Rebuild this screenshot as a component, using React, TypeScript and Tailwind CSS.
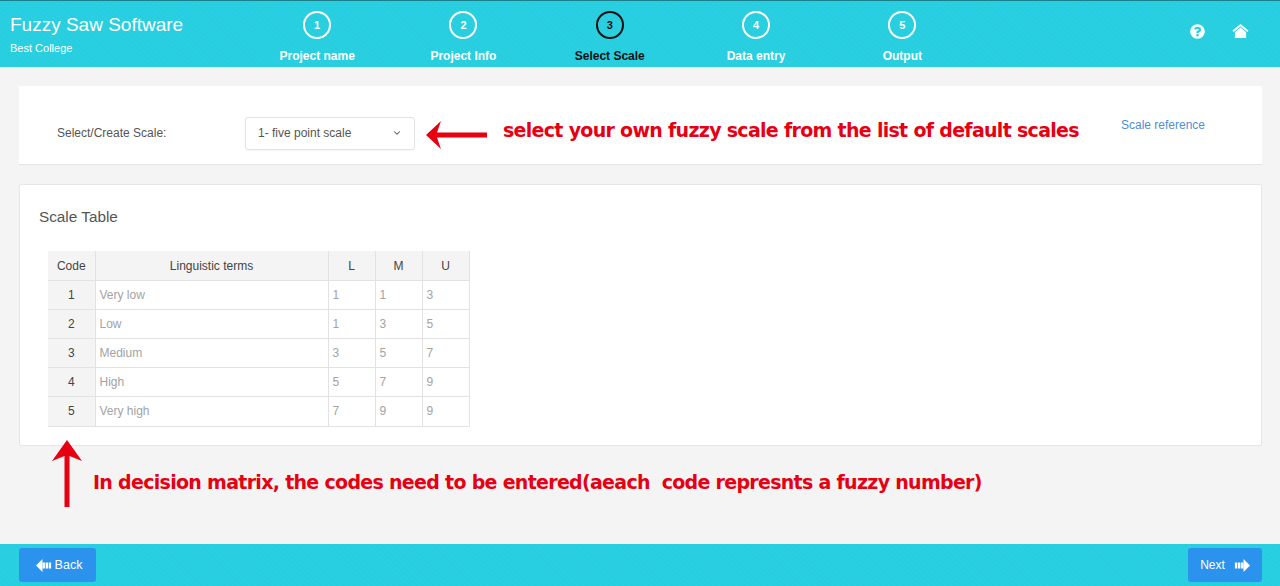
import React from "react";
import { ChevronDown } from "lucide-react";
import { FaQuestionCircle } from "react-icons/fa";

const steps = [
  { n: 1, label: "Project name" },
  { n: 2, label: "Project Info" },
  { n: 3, label: "Select Scale", active: true },
  { n: 4, label: "Data entry" },
  { n: 5, label: "Output" },
];

const rows = [
  { code: 1, term: "Very low", l: 1, m: 1, u: 3 },
  { code: 2, term: "Low", l: 1, m: 3, u: 5 },
  { code: 3, term: "Medium", l: 3, m: 5, u: 7 },
  { code: 4, term: "High", l: 5, m: 7, u: 9 },
  { code: 5, term: "Very high", l: 7, m: 9, u: 9 },
];

const HomeIcon = () => (
  <svg width="17" height="14" viewBox="0 0 16 14" fill="white">
    <path d="M8 0 L16 6.6 L14.8 7.9 L8 2.4 L1.2 7.9 L0 6.6 Z" />
    <path d="M8 3.6 L13.6 8.2 V14 H2.4 V8.2 Z" />
  </svg>
);

// striped arrow used on the footer buttons
const StripedArrow = ({ flip }: { flip?: boolean }) => (
  <svg width="16" height="13" viewBox="0 0 16 13" fill="white" className={flip ? "rotate-180" : ""}>
    <path d="M0 6.5 L6.5 0 V13 Z" />
    <rect x="6.5" y="3.5" width="2.4" height="6" />
    <rect x="9.6" y="3.5" width="2.4" height="6" />
    <rect x="12.7" y="3.5" width="2.4" height="6" />
  </svg>
);

const LeftRedArrow = () => (
  <svg width="61" height="28" viewBox="0 0 61 28" className="shrink-0">
    <path d="M0 14 L15 0 L11 11.5 H61 V16.5 H11 L15 28 Z" fill="#e60012" />
  </svg>
);

const UpRedArrow = () => (
  <svg width="30" height="67" viewBox="0 0 30 67" className="shrink-0">
    <path d="M15 0 L30 21 L17.5 16 V67 H12.5 V16 L0 21 Z" fill="#e60012" />
  </svg>
);

const tealBg =
  "bg-[#26cee0] bg-[repeating-linear-gradient(45deg,rgba(255,255,255,0.02)_0_2px,transparent_2px_4px)]";

export default function App() {
  return (
    <div className="h-[586px] w-[1280px] flex flex-col overflow-hidden bg-[#f4f4f4] font-['Liberation_Sans',Arial,sans-serif]">
      <header className={`h-[67px] shrink-0 flex border-t border-[#1c7f8c] ${tealBg}`}>
        <div className="w-[244px] shrink-0 pl-[10px] pt-[13px] text-white">
          <div className="text-[19px] leading-[22px]">Fuzzy Saw Software</div>
          <div className="text-[11px] leading-[14px] mt-[5px]">Best College</div>
        </div>
        <div className="flex">
          {steps.map((s) => (
            <div
              key={s.n}
              className={`w-[146.3px] flex flex-col items-center pt-[10px] ${s.active ? "text-[#111]" : "text-white"}`}
            >
              <div
                className={`w-[28px] h-[28px] rounded-full border-2 flex items-center justify-center text-[11px] font-bold ${
                  s.active ? "border-[#111]" : "border-white"
                }`}
              >
                {s.n}
              </div>
              <div className="text-[12px] leading-[14px] font-bold mt-[10px]">{s.label}</div>
            </div>
          ))}
        </div>
        <div className="ml-auto flex items-start gap-[27px] pr-[31px] pt-[23px] text-white">
          <FaQuestionCircle size={15} />
          <HomeIcon />
        </div>
      </header>

      <main className="flex-1 pl-[19px] pr-[18px] pt-[19px]">
        <section className="h-[79px] bg-white border-b border-[#e4e4e4] pl-[38px] pt-[31px]">
          <div className="h-[33px] w-full flex items-center">
            <span className="w-[188px] shrink-0 -mt-[2px] text-[12px] text-[#555]">Select/Create Scale:</span>
            <div className="w-[170px] h-[33px] shrink-0 border border-[#e3e3e3] rounded-[3px] flex items-center justify-between pl-[12px] pr-[12px] pb-[2px] text-[12px] text-[#555] shadow-[0_1px_1px_rgba(0,0,0,0.04)]">
              <span>1- five point scale</span>
              <ChevronDown size={10} strokeWidth={2.5} />
            </div>
            <div className="ml-[11px] mt-[3px]">
              <LeftRedArrow />
            </div>
            <span className="ml-[16px] -mt-[6px] w-[618px] shrink-0 whitespace-nowrap text-[19px] font-bold text-[#e60012] font-['DejaVu_Sans',sans-serif] tracking-[-0.7px]">
              select your own fuzzy scale from the list of default scales
            </span>
            <span className="-mt-[17px] text-[12px] text-[#4f8fd6] whitespace-nowrap">Scale reference</span>
          </div>
        </section>

        <section className="h-[262px] mt-[19px] bg-white border border-[#e6e6e6] rounded-[2px] pl-[19px] pt-[22px]">
          <h2 className="text-[15.3px] leading-[20px] text-[#555]">Scale Table</h2>
          <table className="mt-[24px] ml-[9px] border-collapse text-[12px] table-fixed w-[421px]">
            <thead>
              <tr className="h-[29px] bg-[#f4f4f4] text-[#444] text-center">
                <th className="w-[47px] pt-[2px] font-normal border-r border-b border-[#e2e2e2]">Code</th>
                <th className="w-[233px] pt-[2px] font-normal border-r border-b border-[#e2e2e2]">Linguistic terms</th>
                <th className="w-[47px] pt-[2px] font-normal border-r border-b border-[#e2e2e2]">L</th>
                <th className="w-[47px] pt-[2px] font-normal border-r border-b border-[#e2e2e2]">M</th>
                <th className="w-[47px] pt-[2px] font-normal border-r border-b border-[#e2e2e2]">U</th>
              </tr>
            </thead>
            <tbody>
              {rows.map((r) => (
                <tr key={r.code} className="h-[29px] last:h-[30px] text-[#a3a3a3]">
                  <td className="bg-[#f4f4f4] text-[#444] text-center border-r border-b border-[#e2e2e2]">{r.code}</td>
                  <td className="pl-[4px] border-r border-b border-[#e2e2e2]">{r.term}</td>
                  <td className="pl-[4px] border-r border-b border-[#e2e2e2]">{r.l}</td>
                  <td className="pl-[4px] border-r border-b border-[#e2e2e2]">{r.m}</td>
                  <td className="pl-[4px] border-r border-b border-[#e2e2e2]">{r.u}</td>
                </tr>
              ))}
            </tbody>
          </table>
        </section>

        <div className="-mt-[6px] pl-[33px] flex items-start">
          <UpRedArrow />
          <span className="ml-[11px] mt-[29px] whitespace-pre text-[19px] leading-[26px] font-bold text-[#e60012] font-['DejaVu_Sans',sans-serif] tracking-[-0.7px]">
            {"In decision matrix, the codes need to be entered(aeach  code represnts a fuzzy number)"}
          </span>
        </div>
      </main>

      <footer className={`h-[42px] shrink-0 flex items-center justify-between pl-[19px] pr-[18px] ${tealBg}`}>
        <button className="w-[77px] h-[34px] rounded-[3px] bg-[#2b93ee] text-white text-[12.5px] pl-[3px] flex items-center justify-center gap-[3px]">
          <StripedArrow />
          <span>Back</span>
        </button>
        <button className="w-[74px] h-[34px] rounded-[3px] bg-[#2b93ee] text-white text-[12px] flex items-center justify-center gap-[9px]">
          <span>Next</span>
          <StripedArrow flip />
        </button>
      </footer>
    </div>
  );
}
